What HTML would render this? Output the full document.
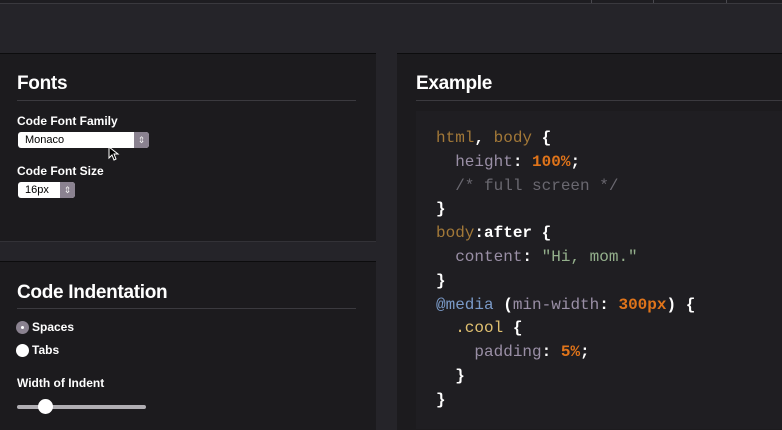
<!DOCTYPE html>
<html><head><style>
body{margin:0;width:782px;height:429px;background:#252429;position:relative;overflow:hidden;font-family:"Liberation Sans",sans-serif;color:#fff}
.top{position:absolute;left:0;top:0;width:782px;height:3px;background:#1e1d21;border-bottom:1px solid #3a393e}
.tab{position:absolute;top:0;height:3px;width:1px;background:#4a494f}
.panel{position:absolute;background:#1c1b1e;border-top:1px solid #0c0c0d}
h2{position:absolute;margin:0;font-size:19px;font-weight:bold;letter-spacing:-0.3px}
.rule{position:absolute;height:1px;background:#3b3a3f}
.lbl{position:absolute;font-size:12px;font-weight:bold}
.sel{position:absolute;background:#fff;border-radius:3px;height:16px;font-size:11px;color:#000;line-height:16px;padding-left:7px;box-sizing:border-box}
.sel .ar{position:absolute;right:0;top:0;width:15px;height:16px;background:#8a8290;border-radius:0 3px 3px 0;color:#eee;font-size:9px;text-align:center;line-height:16px}
.code{position:absolute;left:416px;top:111px;width:366px;height:318px;background:#1f1e22;font-family:"Liberation Mono",monospace;font-size:16px;line-height:23.8px;white-space:pre;padding:16px 0 0 20px;box-sizing:border-box}
.k{color:#a27838}.p{color:#9a8fa6}.n{color:#e0741a;font-weight:bold}.c{color:#6a6870}.s{color:#94b08c}.m{color:#7a9ac8}.y{color:#e0c070}.w{color:#fff;font-weight:bold}
</style></head><body>
<div class="top"></div>
<div class="tab" style="left:591px"></div><div class="tab" style="left:653px"></div><div class="tab" style="left:726px"></div>
<div class="panel" style="left:0;top:53px;width:376px;height:187px"></div>
<div style="position:absolute;left:0;top:241px;width:376px;height:1px;background:#333237"></div>
<div class="panel" style="left:0;top:261px;width:376px;height:168px"></div>
<div class="panel" style="left:397px;top:53px;width:385px;height:376px"></div>
<h2 style="left:17px;top:73px">Fonts</h2>
<div class="rule" style="left:17px;top:100px;width:339px"></div>
<div class="lbl" style="left:17px;top:114px">Code Font Family</div>
<div class="sel" style="left:18px;top:132px;width:131px">Monaco<div class="ar">⇕</div></div>
<div class="lbl" style="left:17px;top:164px">Code Font Size</div>
<div class="sel" style="left:18px;top:182px;width:57px">16px<div class="ar">⇕</div></div>
<svg style="position:absolute;left:108px;top:146px" width="12" height="16" viewBox="0 0 12 16"><path d="M1 1 L1 12 L4 9 L6 14 L8 13 L6 8 L10 8 Z" fill="#000" stroke="#fff" stroke-width="1"/></svg>
<h2 style="left:17px;top:282px">Code Indentation</h2>
<div class="rule" style="left:17px;top:308px;width:339px"></div>
<div style="position:absolute;left:16px;top:321px;width:13px;height:13px;border-radius:50%;background:#8a8290"><div style="position:absolute;left:5px;top:5px;width:3px;height:3px;border-radius:50%;background:#fff"></div></div>
<div class="lbl" style="left:32px;top:320px">Spaces</div>
<div style="position:absolute;left:16px;top:344px;width:13px;height:13px;border-radius:50%;background:#fff"></div>
<div class="lbl" style="left:32px;top:343px">Tabs</div>
<div class="lbl" style="left:17px;top:376px">Width of Indent</div>
<div style="position:absolute;left:17px;top:405px;width:129px;height:4px;border-radius:2px;background:#b0aeb3"></div>
<div style="position:absolute;left:38px;top:399px;width:15px;height:15px;border-radius:50%;background:#fff"></div>
<h2 style="left:416px;top:73px">Example</h2>
<div class="rule" style="left:416px;top:100px;width:366px"></div>
<div class="code"><span class="k">html</span><span class="w">,</span> <span class="k">body</span> <span class="w">{</span>
  <span class="p">height</span><span class="w">:</span> <span class="n">100%</span><span class="w">;</span>
  <span class="c">/* full screen */</span>
<span class="w">}</span>
<span class="k">body</span><span class="w">:after {</span>
  <span class="p">content</span><span class="w">:</span> <span class="s">"Hi, mom."</span>
<span class="w">}</span>
<span class="m">@media</span> <span class="w">(</span><span class="p">min-width</span><span class="w">:</span> <span class="n">300px</span><span class="w">) {</span>
  <span class="y">.cool</span> <span class="w">{</span>
    <span class="p">padding</span><span class="w">:</span> <span class="n">5%</span><span class="w">;</span>
  <span class="w">}</span>
<span class="w">}</span></div>
</body></html>
